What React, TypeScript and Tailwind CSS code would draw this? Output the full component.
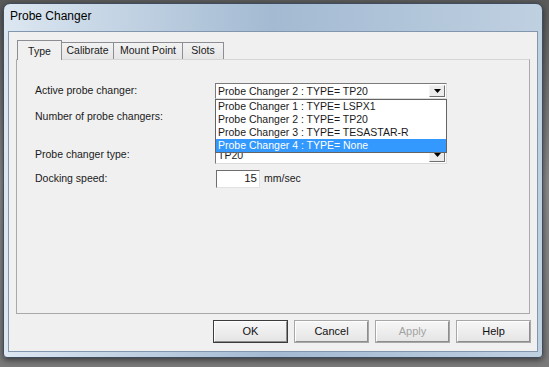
import React from "react";

const font = { fontFamily: '"Liberation Sans", Arial, sans-serif' };

const tabs = [
  { label: "Type", w: "w-[45px]", active: true },
  { label: "Calibrate", w: "w-[52px]" },
  { label: "Mount Point", w: "w-[69px]" },
  { label: "Slots", w: "w-[41px]" },
];

const probeChangers = [
  "Probe Changer 1 : TYPE= LSPX1",
  "Probe Changer 2 : TYPE= TP20",
  "Probe Changer 3 : TYPE= TESASTAR-R",
  "Probe Changer 4 : TYPE= None",
];

const ComboArrow: React.FC = () => (
  <div className="flex h-full w-[16px] items-center justify-center border border-t-[#f4f4f4] border-l-[#f4f4f4] border-r-[#6f6f6f] border-b-[#6f6f6f] bg-[#ececec]">
    <svg width="7" height="4" viewBox="0 0 7 4">
      <path d="M0 0h7L3.5 4z" fill="#000" />
    </svg>
  </div>
);

const Combo: React.FC<{ value: string; tall?: boolean; children?: React.ReactNode }> = ({
  value,
  tall,
  children,
}) => (
  <div
    className={`relative flex ${
      tall ? "h-[18px]" : "h-[16px]"
    } w-[232px] items-center border border-t-[#7a7a7a] border-l-[#7a7a7a] border-r-[#dcdcdc] border-b-[#dcdcdc] bg-white`}
  >
    <span className="flex-1 pl-[2px] leading-[13px]">{value}</span>
    <div className="h-full py-px pr-px">
      <ComboArrow />
    </div>
    {children}
  </div>
);

const Btn: React.FC<{ label: string; isDefault?: boolean; disabled?: boolean }> = ({
  label,
  isDefault,
  disabled,
}) => (
  <div
    className={`flex h-[23px] w-[75px] items-center justify-center border ${
      isDefault ? "border-[#3c3c3c]" : "border-[#a7a7a7]"
    } bg-gradient-to-b from-[#f7f7f7] to-[#e4e4e4]`}
  >
    <div className="flex h-full w-full items-center justify-center border border-t-white border-l-white border-r-[#8d8d8d] border-b-[#8d8d8d]">
      <span className={disabled ? "text-[#a3a3a3]" : "text-[#111]"}>{label}</span>
    </div>
  </div>
);

export default function App() {
  return (
    <div
      className="h-[367px] w-[549px] overflow-hidden bg-gradient-to-b from-[#5a5a5a] via-[#8a8a8a] to-[#7a7a7a] pl-[3px] pt-[3px] text-[10.5px] text-[#1a1a1a]"
      style={font}
    >
      {/* window frame */}
      <div className="flex h-[355px] w-[540px] flex-col rounded-t-[7px] rounded-b-[4px] border border-[#3f4d5e] bg-gradient-to-r from-[#dce7f1] via-[#a3bad2] to-[#bfd0e1] shadow-[0_2px_6px_rgba(0,0,0,0.55)]">
        <div className="h-[27px] pl-[6px] pt-[5px] text-[12px] leading-[14px] text-black">Probe Changer</div>

        <div className="flex-1 px-[4px] pb-[4px]">
          <div className="flex h-[321px] flex-col border border-[#8297ad] bg-[#f0f0f0]">
            <div className="px-[7px] pt-[8px]">
              {/* tab strip */}
              <div className="relative z-10 flex h-[20px] items-end pl-px">
                {tabs.map((t) =>
                  t.active ? (
                    <div
                      key={t.label}
                      className={`${t.w} flex h-[20px] items-start justify-center border border-b-0 border-[#8c8e94] bg-[#f0f0f0] pt-[3px]`}
                    >
                      {t.label}
                    </div>
                  ) : (
                    <div
                      key={t.label}
                      className={`${t.w} mb-px flex h-[17px] items-center justify-center border border-b-0 border-l-0 border-[#8c8e94] bg-gradient-to-b from-[#f2f2f2] to-[#e6e6e6]`}
                    >
                      {t.label}
                    </div>
                  )
                )}
              </div>

              {/* tab page */}
              <div className="relative -mt-px h-[255px] border border-[#a9a9a9] border-t-[#d6d6d6] bg-[#f0f0f0] pl-[18px]">
                <div className="mt-[23px] flex h-[16px] items-center">
                  <span className="w-[180px]">Active probe changer:</span>
                  <Combo value="Probe Changer 2 : TYPE= TP20">
                    <div className="absolute left-[-1px] top-[15px] z-20 flex w-[232px] flex-col border border-[#646464] bg-white">
                      {probeChangers.map((p, i) => (
                        <div
                          key={p}
                          className={`h-[13px] pl-[2px] leading-[13px] ${
                            i === 3 ? "bg-[#3399ff] text-white" : ""
                          }`}
                        >
                          {p}
                        </div>
                      ))}
                    </div>
                  </Combo>
                </div>

                <div className="mt-[10px] flex h-[16px] items-center">
                  <span className="w-[180px]">Number of probe changers:</span>
                </div>

                <div className="mt-[21px] flex h-[18px] items-center">
                  <span className="w-[180px]">Probe changer type:</span>
                  <Combo value="TP20" tall />
                </div>

                <div className="mt-[6px] flex h-[18px] items-center">
                  <span className="w-[181px]">Docking speed:</span>
                  <div className="flex h-[18px] w-[44px] items-center justify-end border border-t-[#6e6e6e] border-l-[#6e6e6e] border-r-[#e2e2e2] border-b-[#e2e2e2] bg-white pr-[2px] text-[11.5px]">
                    15
                  </div>
                  <span className="ml-[4px]">mm/sec</span>
                </div>
              </div>
            </div>

            {/* buttons */}
            <div className="mt-[6px] flex justify-end gap-[6px] pr-[6px] text-[11px]">
              <Btn label="OK" isDefault />
              <Btn label="Cancel" />
              <Btn label="Apply" disabled />
              <Btn label="Help" />
            </div>
          </div>
        </div>
      </div>
    </div>
  );
}
